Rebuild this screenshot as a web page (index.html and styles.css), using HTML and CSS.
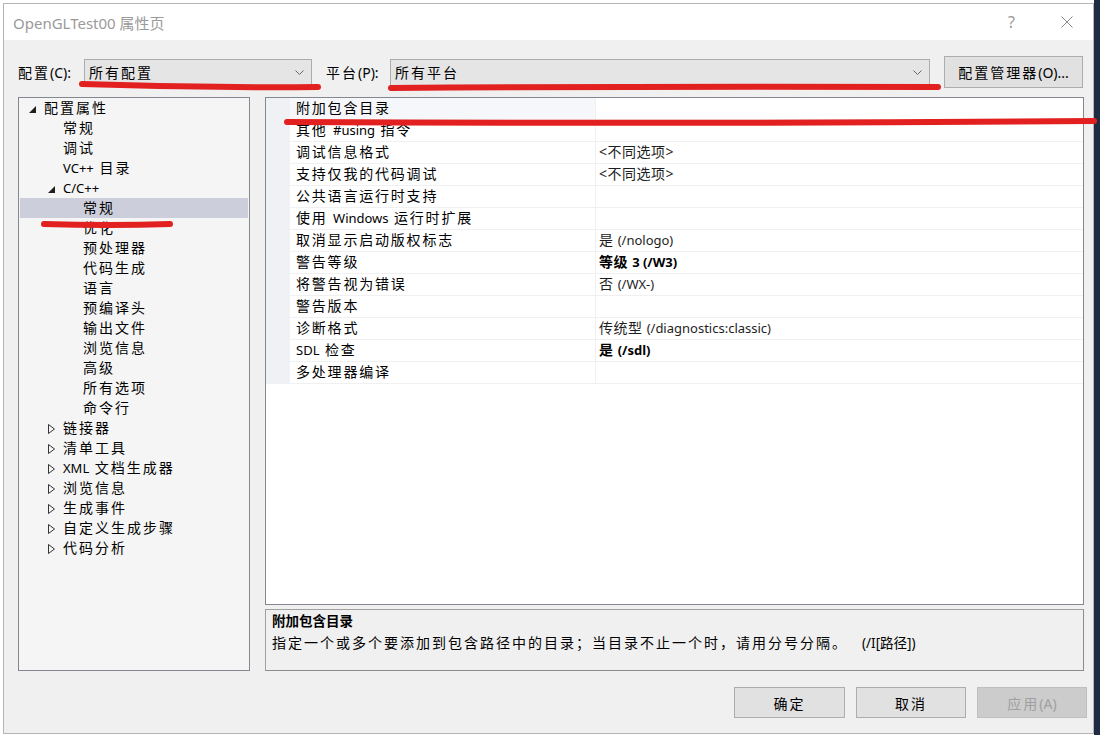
FILE: index.html
```html
<!DOCTYPE html>
<html lang="zh-CN">
<head>
  <meta charset="UTF-8">
  <title>OpenGLTest00 属性页</title>
  <link rel="stylesheet" href="styles.css">
</head>
<body>
<div class="window">
  <div class="titlebar">
    <span class="title">OpenGLTest00 属性页</span>
    <span class="help">?</span>
    <span class="close">
      <svg width="12" height="12" viewBox="0 0 12 12"><path d="M0.5 0.5 L11.5 11.5 M11.5 0.5 L0.5 11.5" stroke="#8a8a8a" stroke-width="1" fill="none"/></svg>
    </span>
  </div>

  <div class="content">
    <div class="config-row">
      <label class="lbl">配置<span class="lat">(C):</span></label>
      <div class="combo combo-config">
        <span>所有配置</span>
        <svg class="chev" width="9" height="5" viewBox="0 0 9 5"><path d="M0.5 0.5 L4.5 4.5 L8.5 0.5" stroke="#666" fill="none"/></svg>
      </div>
      <label class="lbl lbl-platform">平台<span class="lat">(P):</span></label>
      <div class="combo combo-platform">
        <span>所有平台</span>
        <svg class="chev" width="9" height="5" viewBox="0 0 9 5"><path d="M0.5 0.5 L4.5 4.5 L8.5 0.5" stroke="#666" fill="none"/></svg>
      </div>
      <button class="btn btn-manager">配置管理器<span class="lat">(O)...</span></button>
    </div>

    <div class="main">
      <div class="tree">
        <div class="node lvl0"><span class="arrow"><svg width="7" height="7" viewBox="0 0 7 7"><polygon points="7,0 7,7 0,7" fill="#1e1e1e"/></svg></span>配置属性</div>
        <div class="node lvl1"><span class="arrow"></span>常规</div>
        <div class="node lvl1"><span class="arrow"></span>调试</div>
        <div class="node lvl1"><span class="arrow"></span><span class="lat">VC++</span>&nbsp;目录</div>
        <div class="node lvl1"><span class="arrow"><svg width="7" height="7" viewBox="0 0 7 7"><polygon points="7,0 7,7 0,7" fill="#1e1e1e"/></svg></span><span class="lat">C/C++</span></div>
        <div class="node lvl2 active"><span class="arrow"></span>常规</div>
        <div class="node lvl2"><span class="arrow"></span>优化</div>
        <div class="node lvl2"><span class="arrow"></span>预处理器</div>
        <div class="node lvl2"><span class="arrow"></span>代码生成</div>
        <div class="node lvl2"><span class="arrow"></span>语言</div>
        <div class="node lvl2"><span class="arrow"></span>预编译头</div>
        <div class="node lvl2"><span class="arrow"></span>输出文件</div>
        <div class="node lvl2"><span class="arrow"></span>浏览信息</div>
        <div class="node lvl2"><span class="arrow"></span>高级</div>
        <div class="node lvl2"><span class="arrow"></span>所有选项</div>
        <div class="node lvl2"><span class="arrow"></span>命令行</div>
        <div class="node lvl1"><span class="arrow"><svg width="7" height="10" viewBox="0 0 7 10"><polygon points="0.5,0.5 6.5,5 0.5,9.5" stroke="#333" fill="none"/></svg></span>链接器</div>
        <div class="node lvl1"><span class="arrow"><svg width="7" height="10" viewBox="0 0 7 10"><polygon points="0.5,0.5 6.5,5 0.5,9.5" stroke="#333" fill="none"/></svg></span>清单工具</div>
        <div class="node lvl1"><span class="arrow"><svg width="7" height="10" viewBox="0 0 7 10"><polygon points="0.5,0.5 6.5,5 0.5,9.5" stroke="#333" fill="none"/></svg></span><span class="lat">XML</span>&nbsp;文档生成器</div>
        <div class="node lvl1"><span class="arrow"><svg width="7" height="10" viewBox="0 0 7 10"><polygon points="0.5,0.5 6.5,5 0.5,9.5" stroke="#333" fill="none"/></svg></span>浏览信息</div>
        <div class="node lvl1"><span class="arrow"><svg width="7" height="10" viewBox="0 0 7 10"><polygon points="0.5,0.5 6.5,5 0.5,9.5" stroke="#333" fill="none"/></svg></span>生成事件</div>
        <div class="node lvl1"><span class="arrow"><svg width="7" height="10" viewBox="0 0 7 10"><polygon points="0.5,0.5 6.5,5 0.5,9.5" stroke="#333" fill="none"/></svg></span>自定义生成步骤</div>
        <div class="node lvl1"><span class="arrow"><svg width="7" height="10" viewBox="0 0 7 10"><polygon points="0.5,0.5 6.5,5 0.5,9.5" stroke="#333" fill="none"/></svg></span>代码分析</div>
      </div>

      <div class="right">
        <div class="grid">
          <div class="prop selected"><div class="gutter"></div><div class="name">附加包含目录</div><div class="value"></div></div>
          <div class="prop"><div class="gutter"></div><div class="name">其他 <span class="lat">#using</span> 指令</div><div class="value"></div></div>
          <div class="prop"><div class="gutter"></div><div class="name">调试信息格式</div><div class="value">&lt;不同选项&gt;</div></div>
          <div class="prop"><div class="gutter"></div><div class="name">支持仅我的代码调试</div><div class="value">&lt;不同选项&gt;</div></div>
          <div class="prop"><div class="gutter"></div><div class="name">公共语言运行时支持</div><div class="value"></div></div>
          <div class="prop"><div class="gutter"></div><div class="name">使用 <span class="lat">Windows</span> 运行时扩展</div><div class="value"></div></div>
          <div class="prop"><div class="gutter"></div><div class="name">取消显示启动版权标志</div><div class="value">是 <span class="lat">(/nologo)</span></div></div>
          <div class="prop"><div class="gutter"></div><div class="name">警告等级</div><div class="value bold">等级 <span class="lat">3 (/W3)</span></div></div>
          <div class="prop"><div class="gutter"></div><div class="name">将警告视为错误</div><div class="value">否 <span class="lat">(/WX-)</span></div></div>
          <div class="prop"><div class="gutter"></div><div class="name">警告版本</div><div class="value"></div></div>
          <div class="prop"><div class="gutter"></div><div class="name">诊断格式</div><div class="value">传统型 <span class="lat">(/diagnostics:classic)</span></div></div>
          <div class="prop"><div class="gutter"></div><div class="name"><span class="lat">SDL</span> 检查</div><div class="value bold">是 <span class="lat">(/sdl)</span></div></div>
          <div class="prop"><div class="gutter"></div><div class="name">多处理器编译</div><div class="value"></div></div>
        </div>
        <div class="desc">
          <div class="desc-title">附加包含目录</div>
          <div class="desc-text">指定一个或多个要添加到包含路径中的目录；当目录不止一个时，请用分号分隔。<span class="switch">(/I[路径])</span></div>
        </div>
      </div>
    </div>

    <div class="footer">
      <button class="btn btn-ok">确定</button>
      <button class="btn btn-cancel">取消</button>
      <button class="btn btn-apply" disabled>应用<span class="lat">(A)</span></button>
    </div>
  </div>
</div>
<div class="edge"></div>

<!-- red marker strokes drawn over the screenshot -->
<svg class="marks" width="1100" height="735" viewBox="0 0 1100 735">
  <g stroke="#e2201f" stroke-width="6" stroke-linecap="round" fill="none">
    <path d="M82 84 Q200 88 318 87"/>
    <path d="M391 88 Q660 86 938 87"/>
    <path d="M287 122 Q700 124 1094 121"/>
    <path d="M44 224 Q110 226 170 224"/>
  </g>
</svg>
</body>
</html>
```

FILE: styles.css
```css
* { margin: 0; padding: 0; box-sizing: border-box; }
body { position: relative; display: flex; height: 735px; overflow: hidden; background-color: #fff; font-family: "Noto Sans", "Noto Sans CJK SC", sans-serif; font-size: 14px; color: #000; }
.window { width: 1091px; height: 731px; margin: 3px 0 0 3px; border: 1px solid #b4b4b4; display: flex; flex-direction: column; background-color: #f0f0f0; }
.edge { width: 6px; background-color: #1f2b42; }
.marks { position: absolute; left: 0; top: 0; pointer-events: none; }

.titlebar { height: 36px; background-color: #fff; display: flex; align-items: center; padding: 0 20px 0 9px; }
.title { color: #9a9a9a; font-size: 15px; }
.help { margin-left: auto; margin-right: 46px; color: #9a9a9a; font-size: 16px; }
.close svg { display: block; }

.content { flex: 1; padding: 16px 9px 0 14px; display: flex; flex-direction: column; }
.lat { letter-spacing: 0; font-size: 13px; }
.config-row .lat, .btn .lat { font-size: 14px; }

.config-row { display: flex; align-items: center; height: 32px; }
.lbl { width: 66px; letter-spacing: 2px; }
.lbl-platform { width: 64px; margin-left: 14px; }
.combo { height: 27px; background-color: #e5e5e5; border: 1px solid #acacac; display: flex; align-items: center; justify-content: space-between; padding: 0 7px 0 4px; letter-spacing: 2px; }
.combo-config { width: 228px; }
.combo-platform { width: 540px; }
.btn { font-family: inherit; font-size: 14px; letter-spacing: 2px; color: #000; background-color: #e1e1e1; border: 1px solid #adadad; }
.btn-manager { width: 139px; height: 32px; margin-left: 14px; }

.main { display: flex; gap: 15px; height: 574px; margin-top: 9px; }
.tree { width: 232px; border: 1px solid #828790; background-color: #f5f5f5; }
.node { height: 20px; line-height: 20px; display: flex; align-items: center; letter-spacing: 2px; white-space: nowrap; }
.node .arrow { width: 15px; height: 20px; display: flex; align-items: center; flex-shrink: 0; }
.node .arrow svg { display: block; margin-top: 2px; }
.lvl0 { padding-left: 10px; }
.lvl1 { padding-left: 29px; }
.lvl2 { padding-left: 49px; }
.node.active { background-color: #cccedb; margin: 0 1px; padding-left: 48px; }

.right { width: 819px; display: flex; flex-direction: column; gap: 4px; }
.grid { height: 508px; border: 1px solid #828790; background-color: #fff; }
.prop { display: grid; grid-template-columns: 24px 306px 1fr; height: 22px; }
.prop .gutter { background-color: #f0f1f5; }
.prop .name, .prop .value { height: 22px; line-height: 20px; border-bottom: 1px solid #f0f0f0; white-space: nowrap; }
.prop .name { padding-left: 6px; border-right: 1px solid #f0f0f0; letter-spacing: 1.8px; }
.prop .value { padding-left: 3px; letter-spacing: 0.5px; color: #1e1e1e; }
.prop .value.bold { font-weight: bold; color: #000; }
.prop.selected .name { background-color: #f5f7fa; }

.desc { height: 62px; border: 1px solid #a0a0a0; border-right-color: #8c8c8c; border-bottom-color: #8c8c8c; background-color: #f0f0f0; padding: 1px 6px; }
.desc-title { font-weight: bold; font-size: 13.5px; line-height: 20px; }
.desc-text { letter-spacing: 2px; line-height: 24px; white-space: nowrap; }
.desc-text .switch { margin-left: 14px; letter-spacing: 0; font-size: 13.5px; }

.footer { display: flex; justify-content: flex-end; gap: 11px; margin: 16px -3px 0 0; }
.footer .btn { width: 110px; height: 31px; }
.footer .btn-ok { width: 111px; }
.btn-apply { background-color: #cccccc; border-color: #bfbfbf; color: #a0a0a0; }
```
